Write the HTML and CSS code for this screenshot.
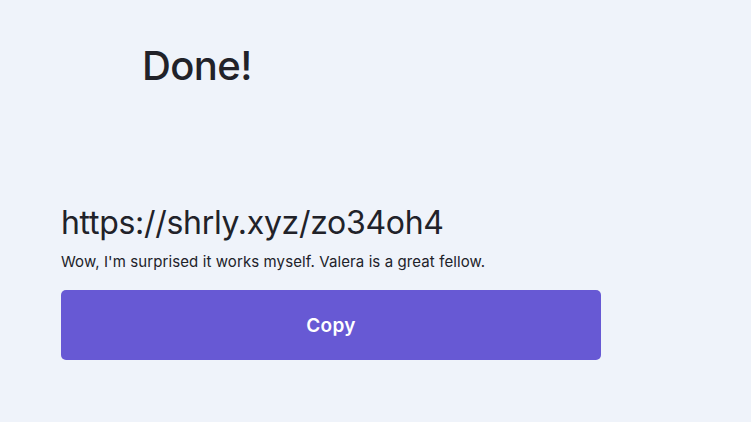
FILE: index.html
```html
<!DOCTYPE html>
<html>
<head>
<meta charset="utf-8">
<link rel="stylesheet" href="styles.css">
</head>
<body>
<main class="page">
  <h1 class="title">Done!</h1>
  <section class="result">
    <div class="link">https://shrly.xyz/zo34oh4</div>
    <p class="note">Wow, I'm surprised it works myself. Valera is a great fellow.</p>
    <button class="copy">Copy</button>
  </section>
</main>
</body>
</html>
```
FILE: styles.css
```css
html, body {
  margin: 0;
  padding: 0;
  background: #eff3fa;
  height: 100%;
}
body {
  font-family: Inter, "Noto Sans", sans-serif;
  color: #212229;
}
.page {
  padding: 0 0 0 61px;
  width: 540px;
}
.title {
  margin: 0;
  padding: 40px 0 0 81px;
  font-size: 40px;
  font-weight: 500;
  line-height: 52px;
  letter-spacing: -0.6px;
}
.result {
  margin-top: 111px;
  display: flex;
  flex-direction: column;
}
.link {
  font-size: 32px;
  font-weight: 400;
  line-height: 40px;
  letter-spacing: -0.3px;
}
.note {
  margin: 9px 0 0;
  font-size: 15px;
  line-height: 20px;
  letter-spacing: 0.1px;
}
.copy {
  margin-top: 18px;
  height: 70px;
  width: 540px;
  border: none;
  border-radius: 5px;
  background: #6759d4;
  color: #ffffff;
  font-family: inherit;
  font-size: 19px;
  font-weight: 600;
  letter-spacing: 0.3px;
}
```
